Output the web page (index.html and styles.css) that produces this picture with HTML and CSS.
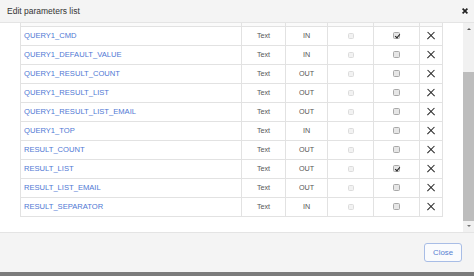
FILE: index.html
```html
<!DOCTYPE html>
<html>
<head>
<meta charset="utf-8">
<link rel="stylesheet" href="styles.css">
</head>
<body>
<div class="modal">
  <div class="header">
    <span class="title">Edit parameters list</span>
    <svg class="hclose" width="6" height="6" viewBox="0 0 6 6"><path d="M0.6 0.6L5.4 5.4M5.4 0.6L0.6 5.4" stroke="#222" stroke-width="1.7"/></svg>
  </div>
  <div class="body">
    <div class="scroll-area">
      <table class="params">
        <colgroup><col class="c-name"><col class="c-type"><col class="c-dir"><col class="c-chk"><col class="c-chk"><col class="c-del"></colgroup>
        <tr class="partial"><td></td><td></td><td></td><td></td><td></td><td></td></tr>
        <tr><td class="name">QUERY1_CMD</td><td>Text</td><td>IN</td><td><span class="cb dis"></span></td><td><span class="cb on"></span></td><td><span class="x"></span></td></tr>
        <tr><td class="name">QUERY1_DEFAULT_VALUE</td><td>Text</td><td>IN</td><td><span class="cb dis"></span></td><td><span class="cb"></span></td><td><span class="x"></span></td></tr>
        <tr><td class="name">QUERY1_RESULT_COUNT</td><td>Text</td><td>OUT</td><td><span class="cb dis"></span></td><td><span class="cb"></span></td><td><span class="x"></span></td></tr>
        <tr><td class="name">QUERY1_RESULT_LIST</td><td>Text</td><td>OUT</td><td><span class="cb dis"></span></td><td><span class="cb"></span></td><td><span class="x"></span></td></tr>
        <tr><td class="name">QUERY1_RESULT_LIST_EMAIL</td><td>Text</td><td>OUT</td><td><span class="cb dis"></span></td><td><span class="cb"></span></td><td><span class="x"></span></td></tr>
        <tr><td class="name">QUERY1_TOP</td><td>Text</td><td>IN</td><td><span class="cb dis"></span></td><td><span class="cb"></span></td><td><span class="x"></span></td></tr>
        <tr><td class="name">RESULT_COUNT</td><td>Text</td><td>OUT</td><td><span class="cb dis"></span></td><td><span class="cb"></span></td><td><span class="x"></span></td></tr>
        <tr><td class="name">RESULT_LIST</td><td>Text</td><td>OUT</td><td><span class="cb dis"></span></td><td><span class="cb on"></span></td><td><span class="x"></span></td></tr>
        <tr><td class="name">RESULT_LIST_EMAIL</td><td>Text</td><td>OUT</td><td><span class="cb dis"></span></td><td><span class="cb"></span></td><td><span class="x"></span></td></tr>
        <tr><td class="name">RESULT_SEPARATOR</td><td>Text</td><td>IN</td><td><span class="cb dis"></span></td><td><span class="cb"></span></td><td><span class="x"></span></td></tr>
      </table>
    </div>
    <div class="scrollbar">
      <div class="arrow up"></div>
      <div class="track"><div class="thumb"></div></div>
      <div class="arrow down"></div>
    </div>
  </div>
  <div class="footer">
    <button class="btn">Close</button>
  </div>
  <div class="band"></div>
</div>
</body>
</html>
```

FILE: styles.css
```css
* { box-sizing: border-box; }
html, body { margin: 0; padding: 0; }
body {
  width: 474px;
  height: 276px;
  overflow: hidden;
  background: #fff;
  font-family: "Liberation Sans", Arial, sans-serif;
  color: #555;
}
.modal {
  display: flex;
  flex-direction: column;
  height: 276px;
}
.header {
  height: 23px;
  flex: none;
  background: #f4f4f4;
  border-bottom: 1px solid #e4e4e4;
  display: flex;
  align-items: center;
  justify-content: space-between;
  padding: 0 6px 1px 7px;
}
.title {
  font-size: 8.5px;
  color: #333;
}
.hclose { display: block; }
.body {
  height: 209px;
  flex: none;
  display: flex;
}
.scroll-area {
  flex: 1;
  padding-left: 20px;
  overflow: hidden;
}
.params {
  border-collapse: collapse;
  width: 422px;
  table-layout: fixed;
  font-size: 7.2px;
}
.c-name { width: 221px; }
.c-type { width: 44px; }
.c-dir { width: 42px; }
.c-chk { width: 46px; }
.c-del { width: 23px; }
.params td {
  border: 1px solid #e2e2e2;
  height: 19px;
  padding: 0;
  text-align: center;
  vertical-align: middle;
  color: #555;
  line-height: 1;
}
.params tr.partial td {
  height: 3px;
  border-top: none;
  background: #fafafa;
}
.params td.name {
  text-align: left;
  padding-left: 3px;
  color: #4f78d4;
  font-size: 7.6px;
}
.cb {
  display: inline-block;
  width: 7px;
  height: 7px;
  border: 1px solid #a8a8a8;
  border-radius: 1.5px;
  background: #e6e6e6;
  vertical-align: middle;
  position: relative;
}
.cb.dis {
  border-color: #dcdcdc;
  background: #f2f2f2;
  width: 6px;
  height: 6px;
}
.cb.on::after {
  content: "";
  position: absolute;
  left: 1.5px;
  top: 0px;
  width: 2px;
  height: 4px;
  border: solid #222;
  border-width: 0 1.4px 1.4px 0;
  transform: rotate(40deg);
}
.x {
  display: inline-block;
  width: 8px;
  height: 8px;
  position: relative;
  vertical-align: middle;
}
.x::before, .x::after {
  content: "";
  position: absolute;
  left: -1px;
  top: 3.3px;
  width: 10px;
  height: 1.3px;
  background: #222;
  transform: rotate(45deg);
}
.x::after { transform: rotate(-45deg); }
.scrollbar {
  width: 11px;
  flex: none;
  background: #f1f1f1;
  display: flex;
  flex-direction: column;
}
.arrow {
  height: 11px;
  flex: none;
  position: relative;
}
.arrow::after {
  content: "";
  position: absolute;
  left: 3.5px;
  border-left: 2px solid transparent;
  border-right: 2px solid transparent;
}
.arrow.up::after { top: 5px; border-bottom: 2.5px solid #555; }
.arrow.down::after { top: 4px; border-top: 2.5px solid #777; }
.track {
  flex: 1;
  padding-top: 38px;
  display: flex;
  flex-direction: column;
}
.thumb {
  flex: 1;
  background: #bdbdbd;
}
.footer {
  flex: none;
  height: 40px;
  background: #f4f4f4;
  border-top: 1px solid #e4e4e4;
  display: flex;
  justify-content: flex-end;
  align-items: center;
  padding-right: 12px;
}
.btn {
  width: 38px;
  height: 19px;
  padding: 0;
  border: 1px solid #a8bde6;
  border-radius: 3px;
  background: #fafbfd;
  color: #5680d2;
  font-family: "Liberation Sans", Arial, sans-serif;
  font-size: 7.8px;
}
.band {
  flex: 1;
  background: #7b7b7b;
}
```
